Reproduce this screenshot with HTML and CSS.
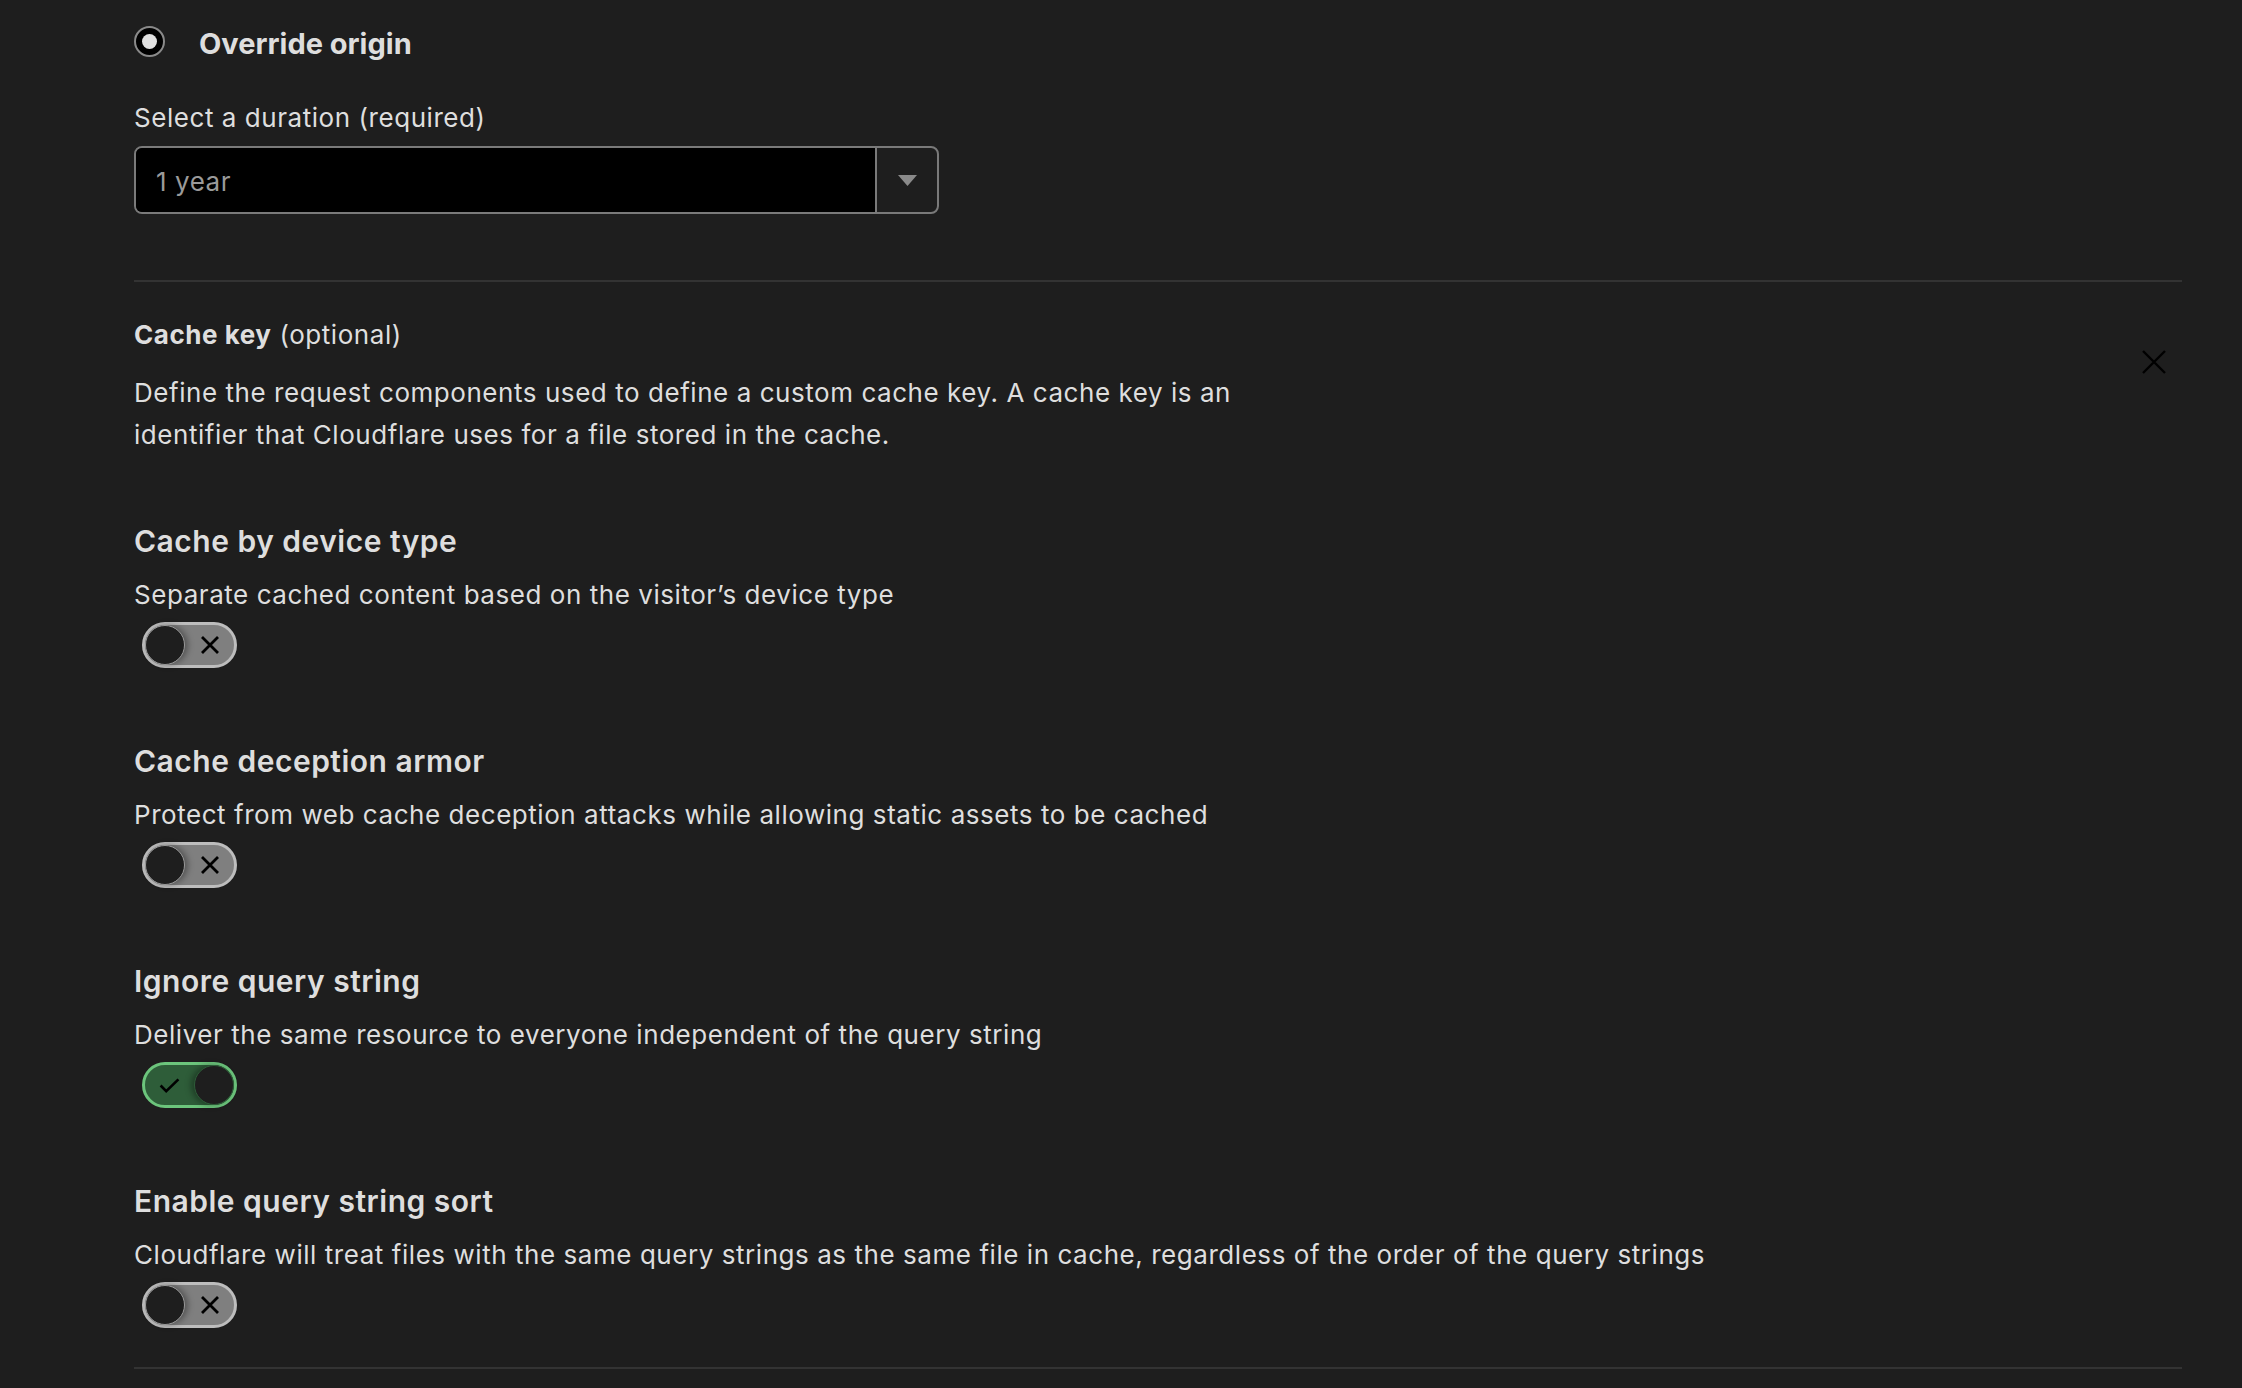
FILE: index.html
```html
<!DOCTYPE html>
<html lang="en">
  <head>
    <meta charset="UTF-8" />
    <title>Cache rule settings</title>
    <link rel="stylesheet" href="styles.css">
  </head>
  <body>
    <div class="page">
      <div class="radio-row">
        <span class="radio"><span class="radio-dot"></span></span>
        <span class="radio-label">Override origin</span>
      </div>

      <div class="field">
        <label class="field-label">Select a duration (required)</label>
        <div class="select">
          <span class="select-value">1 year</span>
          <span class="select-btn">
            <svg viewBox="0 0 19 11"><path d="M0 0h19L9.5 11z" /></svg>
          </span>
        </div>
      </div>

      <hr class="divider">

      <div class="cache-key">
        <div>
          <p class="cache-key-title"><strong>Cache key</strong> (optional)</p>
          <p class="desc narrow">Define the request components used to define a custom cache key. A cache key is an identifier that Cloudflare uses for a file stored in the cache.</p>
        </div>
        <button class="close-btn" aria-label="Remove">
          <svg viewBox="0 0 24 24"><path d="M1 1l22 22M23 1L1 23" /></svg>
        </button>
      </div>

      <div class="setting">
        <h3>Cache by device type</h3>
        <p class="desc">Separate cached content based on the visitor’s device type</p>
        <div class="toggle">
          <span class="knob"></span>
          <span class="toggle-icon"><svg viewBox="0 0 20 18"><path d="M2 1l16 16M18 1L2 17" /></svg></span>
        </div>
      </div>

      <div class="setting">
        <h3>Cache deception armor</h3>
        <p class="desc">Protect from web cache deception attacks while allowing static assets to be cached</p>
        <div class="toggle">
          <span class="knob"></span>
          <span class="toggle-icon"><svg viewBox="0 0 20 18"><path d="M2 1l16 16M18 1L2 17" /></svg></span>
        </div>
      </div>

      <div class="setting">
        <h3>Ignore query string</h3>
        <p class="desc">Deliver the same resource to everyone independent of the query string</p>
        <div class="toggle on">
          <span class="toggle-icon"><svg viewBox="0 0 22 16"><path d="M1.5 8l6 6L20.5 1.5" /></svg></span>
          <span class="knob"></span>
        </div>
      </div>

      <div class="setting">
        <h3>Enable query string sort</h3>
        <p class="desc">Cloudflare will treat files with the same query strings as the same file in cache, regardless of the order of the query strings</p>
        <div class="toggle">
          <span class="knob"></span>
          <span class="toggle-icon"><svg viewBox="0 0 20 18"><path d="M2 1l16 16M18 1L2 17" /></svg></span>
        </div>
      </div>

      <hr class="divider last">
    </div>
  </body>
</html>
```

FILE: styles.css
```css
body {
    margin: 0;
    background-color: #1e1e1e;
    color: #dedede;
    font-family: Inter, "Noto Sans", sans-serif;
    letter-spacing: 0.55px;
}
.page {
    padding: 24px 60px 0 134px;
}
p, h3 {
    margin: 0;
}

/* radio */
.radio-row {
    display: flex;
    align-items: center;
    gap: 34px;
}
.radio {
    width: 31px;
    height: 31px;
    box-sizing: border-box;
    border: 2px solid #8a8a8a;
    border-radius: 50%;
    background-color: #000;
    display: flex;
    align-items: center;
    justify-content: center;
    margin-bottom: 5px;
}
.radio-dot {
    width: 15px;
    height: 15px;
    border-radius: 50%;
    background-color: #e0e0e0;
}
.radio-label {
    font-size: 29px;
    line-height: 40px;
    font-weight: 700;
    letter-spacing: 0;
}

/* select */
.field {
    margin-top: 33px;
}
.field-label {
    display: block;
    font-size: 26px;
    line-height: 42px;
    margin-bottom: 7px;
}
.select {
    width: 805px;
    height: 68px;
    box-sizing: border-box;
    border: 2px solid #7a7a7a;
    border-radius: 8px;
    display: flex;
    overflow: hidden;
}
.select-value {
    flex: 1;
    background-color: #000;
    color: #9a9a9a;
    font-size: 26px;
    display: flex;
    align-items: center;
    padding: 3px 0 0 20px;
}
.select-btn {
    width: 60px;
    border-left: 2px solid #7a7a7a;
    display: flex;
    align-items: center;
    justify-content: center;
}
.select-btn svg {
    width: 19px;
    height: 11px;
    fill: #8a8a8a;
}

.divider {
    border: none;
    height: 2px;
    background-color: #333;
    margin: 66px 0 0;
}
.divider.last {
    margin-top: 39px;
}

/* cache key */
.cache-key {
    display: flex;
    justify-content: space-between;
    align-items: flex-start;
    margin-top: 32px;
}
.cache-key-title {
    font-size: 26px;
    line-height: 42px;
}
.cache-key-title strong {
    font-weight: 700;
}
.close-btn {
    background: none;
    border: none;
    padding: 0;
    margin: 36px 16px 0 0;
    width: 24px;
    height: 24px;
    cursor: pointer;
}
.close-btn svg {
    width: 24px;
    height: 24px;
    stroke: #000;
    stroke-width: 2.4;
    fill: none;
}

.desc {
    font-size: 26px;
    line-height: 42px;
    margin-top: 14px;
}
.desc.narrow {
    margin-top: 16px;
    max-width: 1144px;
}

/* settings */
.setting {
    margin-top: 74px;
}
.cache-key + .setting {
    margin-top: 66px;
}
.setting h3 {
    font-size: 30px;
    line-height: 38px;
    font-weight: 600;
    letter-spacing: 0.5px;
}

/* toggle */
.toggle {
    margin: 6px 0 0 8px;
    width: 95px;
    height: 46px;
    box-sizing: border-box;
    border: 3px solid #bdbdbd;
    border-radius: 23px;
    background-color: #7f7f7f;
    display: flex;
    align-items: center;
}
.knob {
    width: 40px;
    height: 40px;
    box-sizing: border-box;
    border-radius: 50%;
    background-color: #1e1e1e;
    border: 1px solid #9a9a9a;
    box-shadow: 3px 0 6px rgba(0, 0, 0, 0.35);
}
.toggle-icon {
    flex: 1;
    display: flex;
    align-items: center;
    justify-content: center;
}
.toggle-icon svg {
    width: 20px;
    height: 18px;
    stroke: #000;
    stroke-width: 2.8;
    fill: none;
}
.toggle.on {
    border-color: #6cc57c;
    background-color: #2e5d39;
}
.toggle.on .knob {
    border-color: #2e5d39;
    box-shadow: -3px 0 6px rgba(0, 0, 0, 0.35);
}
.toggle.on .toggle-icon svg {
    width: 21px;
    height: 15px;
}
```
